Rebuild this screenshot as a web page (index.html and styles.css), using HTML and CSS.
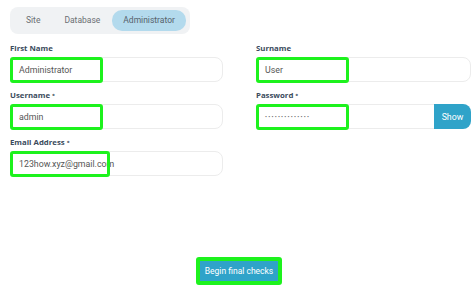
FILE: index.html
```html
<!DOCTYPE html>
<html lang="en">
<head>
    <meta charset="UTF-8">
    <title>Install - Administrator</title>
    <link rel="stylesheet" href="styles.css">
</head>
<body>
    <div class="page">
        <div class="tabs">
            <div class="tab">Site</div>
            <div class="tab">Database</div>
            <div class="tab active">Administrator</div>
        </div>

        <div class="form-grid">
            <div class="field">
                <label>First Name</label>
                <div class="input">
                    <span class="value">Administrator</span>
                    <span class="mark" style="width: 93px"></span>
                </div>
            </div>
            <div class="field">
                <label>Surname</label>
                <div class="input">
                    <span class="value">User</span>
                    <span class="mark" style="width: 93px"></span>
                </div>
            </div>
            <div class="field">
                <label>Username <span class="req">•</span></label>
                <div class="input">
                    <span class="value">admin</span>
                    <span class="mark" style="width: 93px"></span>
                </div>
            </div>
            <div class="field">
                <label>Password <span class="req">•</span></label>
                <div class="input-group">
                    <div class="input">
                        <span class="value dots">••••••••••••••</span>
                        <span class="mark" style="width: 93px"></span>
                    </div>
                    <button class="show-btn">Show</button>
                </div>
            </div>
            <div class="field">
                <label>Email Address <span class="req">•</span></label>
                <div class="input">
                    <span class="value">123how.xyz@gmail.com</span>
                    <span class="mark" style="width: 100px"></span>
                </div>
            </div>
        </div>

        <div class="actions">
            <div class="btn-wrap">
                <button class="primary">Begin final checks</button>
            </div>
        </div>
    </div>
</body>
</html>
```

FILE: styles.css
```css
body {
    margin: 0;
    background-color: #ffffff;
    font-family: Roboto, "Liberation Sans", sans-serif;
    color: #555;
}

.page {
    width: 474px;
    height: 289px;
    padding: 7px 3px 0 10px;
    box-sizing: border-box;
    display: flex;
    flex-direction: column;
}

.tabs {
    display: flex;
    align-items: center;
    width: 180px;
    height: 27px;
    padding: 0 5px 0 6px;
    box-sizing: border-box;
    background-color: #f0f2f4;
    border-radius: 8px;
}

.tab {
    font-size: 8.5px;
    color: #6b6f73;
    padding: 0 12px;
    height: 21px;
    line-height: 21px;
}

.tab:first-child {
    padding-left: 10px;
}

.tab.active {
    margin-left: auto;
    background-color: #b3daed;
    border-radius: 10px;
    color: #56616b;
    padding: 0 11px;
}

.form-grid {
    display: grid;
    grid-template-columns: 213px 215px;
    column-gap: 33px;
    row-gap: 8px;
    margin-top: 9px;
}

.field label {
    display: block;
    font-family: "Open Sans", sans-serif;
    font-weight: 700;
    font-size: 7.8px;
    color: #3a4b5c;
    height: 10px;
    line-height: 10px;
    margin-bottom: 4px;
}

.req {
    color: #6a7580;
}

.input {
    position: relative;
    height: 25px;
    border: 1px solid #ececec;
    border-radius: 8px;
    box-sizing: border-box;
    background: #fff;
    display: flex;
    align-items: center;
    padding-left: 8px;
    font-size: 8.8px;
    color: #555;
    flex: 1;
}

.value.dots {
    font-size: 6px;
    letter-spacing: 1.2px;
    color: #666;
}

.mark {
    position: absolute;
    left: -1px;
    top: -1px;
    height: 26px;
    border: 3px solid #1df21d;
    border-radius: 3px;
    box-sizing: border-box;
}

.input-group {
    display: flex;
    height: 25px;
}

.input-group .input {
    border-radius: 8px 0 0 8px;
    border-right: none;
}

.show-btn {
    width: 37px;
    height: 25px;
    border: none;
    background-color: #2fa3c9;
    color: #fff;
    font-family: Roboto, sans-serif;
    font-size: 8.8px;
    border-radius: 0 8px 8px 0;
    padding: 0;
}

.actions {
    margin-top: auto;
    margin-bottom: 4px;
    display: flex;
    justify-content: center;
    padding-right: 3px;
}

.btn-wrap {
    border: 3px solid #1df21d;
    border-radius: 3px;
    padding: 1px;
    background: #1df21d;
}

.primary {
    display: block;
    width: 78px;
    height: 20px;
    border: none;
    background-color: #2fa3c9;
    color: #fff;
    font-family: Roboto, sans-serif;
    font-size: 8.5px;
    padding: 0;
}
```
